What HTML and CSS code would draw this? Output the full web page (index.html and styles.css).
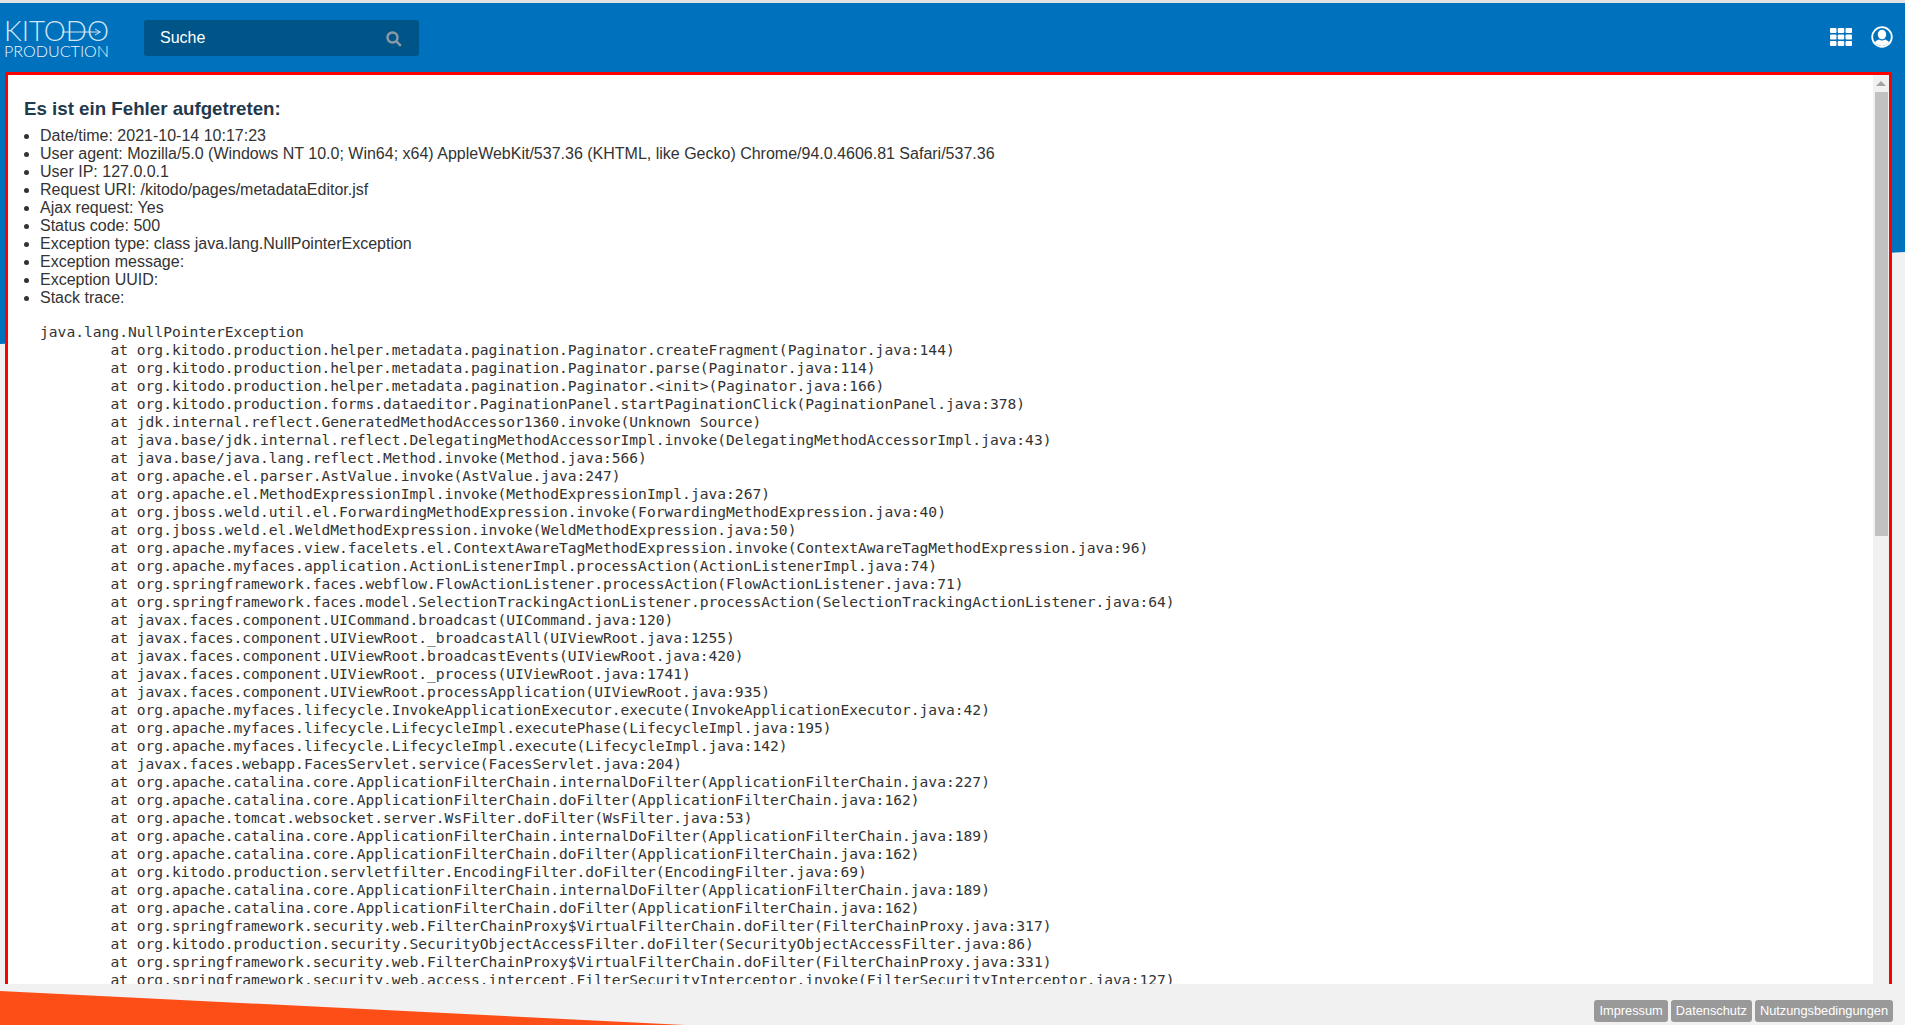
FILE: index.html
```html
<!DOCTYPE html>
<html lang="de">
<head>
<meta charset="utf-8">
<title>Kitodo.Production</title>
<link rel="stylesheet" href="styles.css">
</head>
<body>
<header class="topbar">
  <svg class="logo" viewBox="0 0 110 50" width="110" height="50" aria-label="Kitodo Production">
    <text class="logo-main" x="4" y="28" textLength="105" lengthAdjust="spacingAndGlyphs">KITODO</text>
    <text class="logo-sub" x="4" y="43.500" textLength="105" lengthAdjust="spacingAndGlyphs">PRODUCTION</text>
    <path class="logo-arrow" d="M62 19H100M95 16L100.500 19L95 22"/>
  </svg>
  <form class="search">
    <span class="search-label">Suche</span>
    <svg class="search-icon" viewBox="0 0 16 16" width="16" height="16"><circle cx="6.500" cy="6.500" r="5" /><path d="M10.200 10.200L14.800 14.800"/></svg>
  </form>
  <nav class="top-icons">
    <svg class="grid-icon" viewBox="0 0 22 18" width="22" height="18">
      <rect x="0" y="0" width="6.500" height="5" rx="1"/><rect x="7.750" y="0" width="6.500" height="5" rx="1"/><rect x="15.500" y="0" width="6.500" height="5" rx="1"/>
      <rect x="0" y="6.500" width="6.500" height="5" rx="1"/><rect x="7.750" y="6.500" width="6.500" height="5" rx="1"/><rect x="15.500" y="6.500" width="6.500" height="5" rx="1"/>
      <rect x="0" y="13" width="6.500" height="5" rx="1"/><rect x="7.750" y="13" width="6.500" height="5" rx="1"/><rect x="15.500" y="13" width="6.500" height="5" rx="1"/>
    </svg>
    <svg class="user-icon" viewBox="0 0 22 22" width="22" height="22">
      <defs><clipPath id="uc"><circle cx="11" cy="11" r="9"/></clipPath></defs>
      <circle class="user-ring" cx="11" cy="11" r="9.800"/>
      <g clip-path="url(#uc)"><ellipse cx="11" cy="8.500" rx="4.200" ry="4.800"/><path d="M2 21C2 16 6 14.500 8 13.500C9.500 14.800 12.500 14.800 14 13.500C16 14.500 20 16 20 21Z"/></g>
    </svg>
  </nav>
</header>

<main class="error-window">
  <div class="error-content">
    <h3 class="error-title">Es ist ein Fehler aufgetreten:</h3>
    <ul class="error-list">
      <li>Date/time: 2021-10-14 10:17:23</li>
      <li>User agent: Mozilla/5.0 (Windows NT 10.0; Win64; x64) AppleWebKit/537.36 (KHTML, like Gecko) Chrome/94.0.4606.81 Safari/537.36</li>
      <li>User IP: 127.0.0.1</li>
      <li>Request URI: /kitodo/pages/metadataEditor.jsf</li>
      <li>Ajax request: Yes</li>
      <li>Status code: 500</li>
      <li>Exception type: class java.lang.NullPointerException</li>
      <li>Exception message:</li>
      <li>Exception UUID:</li>
      <li>Stack trace:</li>
    </ul>
<pre class="stack">java.lang.NullPointerException
	at org.kitodo.production.helper.metadata.pagination.Paginator.createFragment(Paginator.java:144)
	at org.kitodo.production.helper.metadata.pagination.Paginator.parse(Paginator.java:114)
	at org.kitodo.production.helper.metadata.pagination.Paginator.&lt;init&gt;(Paginator.java:166)
	at org.kitodo.production.forms.dataeditor.PaginationPanel.startPaginationClick(PaginationPanel.java:378)
	at jdk.internal.reflect.GeneratedMethodAccessor1360.invoke(Unknown Source)
	at java.base/jdk.internal.reflect.DelegatingMethodAccessorImpl.invoke(DelegatingMethodAccessorImpl.java:43)
	at java.base/java.lang.reflect.Method.invoke(Method.java:566)
	at org.apache.el.parser.AstValue.invoke(AstValue.java:247)
	at org.apache.el.MethodExpressionImpl.invoke(MethodExpressionImpl.java:267)
	at org.jboss.weld.util.el.ForwardingMethodExpression.invoke(ForwardingMethodExpression.java:40)
	at org.jboss.weld.el.WeldMethodExpression.invoke(WeldMethodExpression.java:50)
	at org.apache.myfaces.view.facelets.el.ContextAwareTagMethodExpression.invoke(ContextAwareTagMethodExpression.java:96)
	at org.apache.myfaces.application.ActionListenerImpl.processAction(ActionListenerImpl.java:74)
	at org.springframework.faces.webflow.FlowActionListener.processAction(FlowActionListener.java:71)
	at org.springframework.faces.model.SelectionTrackingActionListener.processAction(SelectionTrackingActionListener.java:64)
	at javax.faces.component.UICommand.broadcast(UICommand.java:120)
	at javax.faces.component.UIViewRoot._broadcastAll(UIViewRoot.java:1255)
	at javax.faces.component.UIViewRoot.broadcastEvents(UIViewRoot.java:420)
	at javax.faces.component.UIViewRoot._process(UIViewRoot.java:1741)
	at javax.faces.component.UIViewRoot.processApplication(UIViewRoot.java:935)
	at org.apache.myfaces.lifecycle.InvokeApplicationExecutor.execute(InvokeApplicationExecutor.java:42)
	at org.apache.myfaces.lifecycle.LifecycleImpl.executePhase(LifecycleImpl.java:195)
	at org.apache.myfaces.lifecycle.LifecycleImpl.execute(LifecycleImpl.java:142)
	at javax.faces.webapp.FacesServlet.service(FacesServlet.java:204)
	at org.apache.catalina.core.ApplicationFilterChain.internalDoFilter(ApplicationFilterChain.java:227)
	at org.apache.catalina.core.ApplicationFilterChain.doFilter(ApplicationFilterChain.java:162)
	at org.apache.tomcat.websocket.server.WsFilter.doFilter(WsFilter.java:53)
	at org.apache.catalina.core.ApplicationFilterChain.internalDoFilter(ApplicationFilterChain.java:189)
	at org.apache.catalina.core.ApplicationFilterChain.doFilter(ApplicationFilterChain.java:162)
	at org.kitodo.production.servletfilter.EncodingFilter.doFilter(EncodingFilter.java:69)
	at org.apache.catalina.core.ApplicationFilterChain.internalDoFilter(ApplicationFilterChain.java:189)
	at org.apache.catalina.core.ApplicationFilterChain.doFilter(ApplicationFilterChain.java:162)
	at org.springframework.security.web.FilterChainProxy$VirtualFilterChain.doFilter(FilterChainProxy.java:317)
	at org.kitodo.production.security.SecurityObjectAccessFilter.doFilter(SecurityObjectAccessFilter.java:86)
	at org.springframework.security.web.FilterChainProxy$VirtualFilterChain.doFilter(FilterChainProxy.java:331)
	at org.springframework.security.web.access.intercept.FilterSecurityInterceptor.invoke(FilterSecurityInterceptor.java:127)</pre>
  </div>
  <div class="scrollbar">
    <span class="scroll-arrow"></span>
    <span class="scroll-thumb"></span>
  </div>
</main>

<footer class="footer">
  <a class="footer-link">Impressum</a>
  <a class="footer-link">Datenschutz</a>
  <a class="footer-link">Nutzungsbedingungen</a>
</footer>
</body>
</html>
```

FILE: styles.css
```css
* { box-sizing: border-box; }

html, body { height: 100%; }

body {
  margin: 0;
  height: 1025px;
  overflow: hidden;
  position: relative;
  display: flex;
  flex-direction: column;
  background: #f1f1f1;
  border-top: 3px solid #e2e2e2;
  font-family: "Liberation Sans", Arial, sans-serif;
  color: #333;
}

body::before {
  content: "";
  position: absolute;
  inset: 0 0 auto 0;
  height: 341px;
  background: #0071bc;
  clip-path: polygon(0 0, 100% 0, 100% 249px, 0 341px);
}

.topbar {
  position: relative;
  flex: 0 0 69px;
  display: flex;
  align-items: center;
  padding: 0 12px 0 0;
}

.logo { flex: none; margin: 1px 34px 0 0; }
.logo-main { font: 300 27px Lato, sans-serif; fill: #d3e7f4; }
.logo-sub { font: 300 15.500px Lato, sans-serif; fill: #eef5fa; }
.logo-arrow { fill: none; stroke: #d3e7f4; stroke-width: 1; }

.search {
  width: 275px;
  height: 36px;
  margin-top: 1px;
  padding: 0 17px 0 16px;
  display: flex;
  align-items: center;
  justify-content: space-between;
  background: #005588;
  border-radius: 3px;
  color: #fff;
  font-size: 16px;
}

.search-icon { fill: none; stroke: #8c9aa5; stroke-width: 2.400; margin-top: 2px; }

.top-icons {
  margin: -1px 0 0 auto;
  display: flex;
  align-items: center;
  gap: 19px;
}

.grid-icon { fill: #fff; }
.user-icon { fill: #fff; }
.user-ring { fill: none; stroke: #fff; stroke-width: 1.800; }

.error-window {
  position: relative;
  flex: 1 1 0;
  min-height: 0;
  margin: 0 13px 0 5px;
  display: flex;
  overflow: hidden;
  background: #fff;
  border: 3px solid #f00;
  border-bottom: 0;
  border-radius: 3px 3px 0 0;
}

.error-content {
  flex: 1 1 0;
  min-width: 0;
  overflow: hidden;
  padding: 22px 16px 0;
}

.error-title {
  margin: 0 0 7px;
  font-size: 18.720px;
  line-height: 23px;
  font-weight: 700;
  color: #1f3a4d;
}

.error-list {
  margin: 0;
  padding: 0 0 0 16px;
  font-size: 16px;
  line-height: 18px;
}

.stack {
  margin: 16px 0 0 16px;
  font: 14.620px/18px "DejaVu Sans Mono", monospace;
  tab-size: 8;
  white-space: pre;
}

.scrollbar {
  flex: 0 0 16px;
  display: flex;
  flex-direction: column;
  align-items: center;
  background: #f1f1f1;
}

.scroll-arrow {
  flex: 0 0 5px;
  width: 0;
  height: 0;
  margin-top: 6px;
  border: 5px solid transparent;
  border-top: 0;
  border-bottom: 5px solid #a3a3a3;
}

.scroll-thumb {
  width: 13px;
  height: 444px;
  margin-top: 6px;
  background: #c1c1c1;
}

.footer {
  position: relative;
  flex: 0 0 41px;
  display: flex;
  justify-content: flex-end;
  align-items: flex-end;
  gap: 3px;
  padding: 0 12px 3px 0;
  background: #f1f1f1;
}

.footer::before {
  content: "";
  position: absolute;
  left: 0;
  bottom: 0;
  width: 685px;
  height: 34px;
  background: #fd4e17;
  clip-path: polygon(0 0, 100% 100%, 0 100%);
}

.footer-link {
  position: relative;
  height: 22px;
  padding: 0 5px 2px;
  display: flex;
  align-items: center;
  background: #999;
  border-radius: 3px;
  color: #fff;
  font-size: 12.800px;
}
```
